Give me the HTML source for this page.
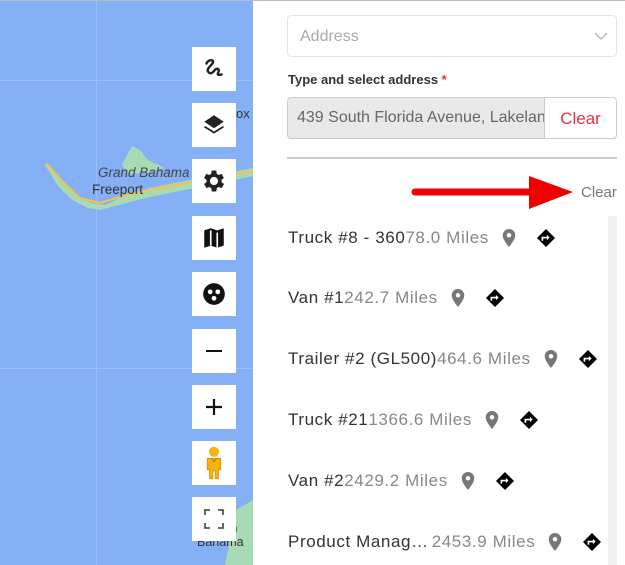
<!DOCTYPE html>
<html><head><style>
body{margin:0;width:625px;height:565px;overflow:hidden;font-family:"Liberation Sans",sans-serif;position:relative;background:#fff}
.map{position:absolute;left:0;top:0;width:253px;height:565px;background:#86b0f6;overflow:hidden}
.btn{position:absolute;left:192px;width:44px;height:44px;background:#fff;display:flex;align-items:center;justify-content:center}
.row{position:absolute;left:288px;height:22px;font-size:17px;letter-spacing:.6px;color:#333;display:flex;align-items:center;white-space:nowrap}
.row .m{color:#888}
.pin{margin-left:13px}
.dir{margin-left:21px}
</style></head><body>
<div class="map">
<div style="position:absolute;left:96px;top:0;width:1px;height:565px;background:#9cc0f8"></div>
<div style="position:absolute;left:0;top:80px;width:253px;height:1px;background:#9cc0f8"></div>
<div style="position:absolute;left:0;top:368px;width:253px;height:1px;background:#9cc0f8"></div>
<svg style="position:absolute;left:0;top:0" width="253" height="565">
<path d="M46 163 L62 180 L78 196 L92 203 L105 205 L120 198 L150 188 L200 178 L253 168 L253 176 L200 187 L150 197 L115 206 L100 210 L88 208 L72 200 L58 186 L45 165Z" fill="#a8dab5"/>
<path d="M122 165 L132 146 L140 150 L148 160 L165 168 L150 172 L128 174Z" fill="#a8dab5"/>
<path d="M47 164 L62 181 L80 198 L100 203 L130 194 L200 181 L253 171" stroke="#f5c24a" stroke-width="2" fill="none"/>
<path d="M236 510 L253 500 L253 565 L225 565Z" fill="#a8dab5"/>
</svg>
<div style="position:absolute;left:98px;top:165px;font-size:13.5px;font-style:italic;color:#444">Grand Bahama</div>
<div style="position:absolute;left:92px;top:182px;font-size:13.5px;color:#333">Freeport</div>
<div style="position:absolute;left:236px;top:106px;font-size:13px;color:#333">ox</div>
<div style="position:absolute;left:197px;top:521px;font-size:12.5px;color:#333;line-height:14px">San An<br>Bahama</div>
<div class="btn" style="top:47px"><svg width="26" height="26" viewBox="0 0 24 24"><path d="M5 7c2-4 7-4 6-1s-7 6-4 9 5-2 7-3 3 1 2 3-1 3 3 2" stroke="#222" stroke-width="2.2" fill="none" stroke-linecap="round"/></svg></div>
<div class="btn" style="top:103px"><svg width="26" height="26" viewBox="0 0 24 24"><path d="M12 3l9 6-9 6-9-6z" fill="#222"/><path d="M4 13l8 5 8-5 1.5 1-9.5 6-9.5-6z" fill="#222"/></svg></div>
<div class="btn" style="top:159px"><svg width="28" height="28" viewBox="0 0 24 24"><path fill="#222" d="M19.4 13a7.5 7.5 0 000-2l2.1-1.6-2-3.5-2.5 1a7 7 0 00-1.7-1L15 3h-4l-.4 2.9a7 7 0 00-1.7 1l-2.5-1-2 3.5L6.6 11a7.5 7.5 0 000 2l-2.1 1.6 2 3.5 2.5-1a7 7 0 001.7 1L11 21h4l.4-2.9a7 7 0 001.7-1l2.5 1 2-3.5zM13 15.5a3.5 3.5 0 110-7 3.5 3.5 0 010 7z" transform="translate(-1 0)"/></svg></div>
<div class="btn" style="top:216px"><svg width="26" height="26" viewBox="0 0 24 24"><path d="M3 5l6-2 6 2 6-2v16l-6 2-6-2-6 2z" fill="#111"/><path d="M9 5v14M15 7v14" stroke="#fff" stroke-width="1.5"/></svg></div>
<div class="btn" style="top:272px"><svg width="26" height="26" viewBox="0 0 24 24"><circle cx="12" cy="12" r="10" fill="#111"/><circle cx="8.5" cy="10" r="2.2" fill="#fff"/><circle cx="15.5" cy="10" r="2.2" fill="#fff"/><circle cx="12" cy="16" r="2.2" fill="#fff"/></svg></div>
<div class="btn" style="top:329px"><div style="width:16px;height:2.5px;background:#111"></div></div>
<div class="btn" style="top:385px"><svg width="18" height="18"><path d="M9 1v16M1 9h16" stroke="#111" stroke-width="2.2"/></svg></div>
<div class="btn" style="top:441px"><svg width="18" height="36" viewBox="0 0 16 30"><circle cx="8" cy="5" r="4.5" fill="#f9b10b"/><path d="M2 11h12v10h-2v8h-3v-7h-2v7H4v-8H2z" fill="#f9b10b" stroke="#c98a00" stroke-width=".6"/><path d="M6 11l2 3 2-3" stroke="#d06020" stroke-width=".8" fill="none"/></svg></div>
<div class="btn" style="top:497px"><svg width="24" height="24" viewBox="0 0 24 24"><path d="M3 8V3h5M16 3h5v5M21 16v5h-5M8 21H3v-5" stroke="#555" stroke-width="1.8" fill="none"/></svg></div>
</div>
<div style="position:absolute;left:0;top:0;width:625px;height:1px;background:#bbb"></div>
<div style="position:absolute;left:287px;top:15px;width:330px;height:42px;border:1px solid #e3e3e3;border-radius:4px;box-sizing:border-box;font-size:16px;color:#aaa;padding:12px 0 0 12px">Address<svg style="position:absolute;right:8px;top:16px" width="14" height="9"><path d="M1 1l6 6 6-6" stroke="#bbb" stroke-width="1.5" fill="none"/></svg></div>
<div style="position:absolute;left:288px;top:72px;font-size:13px;font-weight:bold;color:#333">Type and select address <span style="color:#e33">*</span></div>
<div style="position:absolute;left:287px;top:97px;width:258px;height:42px;background:#e9e9e9;border:1px solid #ccc;border-radius:4px 0 0 4px;box-sizing:border-box;font-size:16px;color:#666;padding:11px 0 0 9px;white-space:nowrap;overflow:hidden">439 South Florida Avenue, Lakelan</div>
<div style="position:absolute;left:544px;top:97px;width:73px;height:42px;border:1px solid #ccc;border-radius:0 4px 4px 0;box-sizing:border-box;font-size:17px;color:#dc3545;text-align:center;padding-top:11px">Clear</div>
<div style="position:absolute;left:287px;top:157px;width:330px;height:2px;background:#ccc"></div>
<svg style="position:absolute;left:405px;top:172px" width="170" height="40"><path d="M10 20H140" stroke="#e00" stroke-width="7" stroke-linecap="round"/><path d="M124 4L168 20 124 37z" fill="#e00"/></svg>
<div style="position:absolute;left:581px;top:184px;font-size:15px;color:#777">Clear</div>
<div style="position:absolute;left:608px;top:216px;width:9px;height:349px;background:#f1f1f1"></div>

<div class="row" style="top:227px">Truck #8 - 360<span class="m">78.0 Miles</span><svg class="pin" width="14" height="18" viewBox="0 0 14 20"><path d="M7 0a7 7 0 00-7 7c0 5 7 13 7 13s7-8 7-13a7 7 0 00-7-7zm0 9.5a2.5 2.5 0 110-5 2.5 2.5 0 010 5z" fill="#777"/></svg><svg class="dir" width="18" height="18" viewBox="0 0 20 20"><path d="M10 0l10 10-10 10L0 10z" fill="#000"/><path d="M6 13v-3.5h6" stroke="#fff" stroke-width="1.8" fill="none"/><path d="M11 6.5l3 3-3 3z" fill="#fff"/></svg></div>
<div class="row" style="top:287px">Van #1<span class="m">242.7 Miles</span><svg class="pin" width="14" height="18" viewBox="0 0 14 20"><path d="M7 0a7 7 0 00-7 7c0 5 7 13 7 13s7-8 7-13a7 7 0 00-7-7zm0 9.5a2.5 2.5 0 110-5 2.5 2.5 0 010 5z" fill="#777"/></svg><svg class="dir" width="18" height="18" viewBox="0 0 20 20"><path d="M10 0l10 10-10 10L0 10z" fill="#000"/><path d="M6 13v-3.5h6" stroke="#fff" stroke-width="1.8" fill="none"/><path d="M11 6.5l3 3-3 3z" fill="#fff"/></svg></div>
<div class="row" style="top:348px">Trailer #2 (GL500)<span class="m">464.6 Miles</span><svg class="pin" width="14" height="18" viewBox="0 0 14 20"><path d="M7 0a7 7 0 00-7 7c0 5 7 13 7 13s7-8 7-13a7 7 0 00-7-7zm0 9.5a2.5 2.5 0 110-5 2.5 2.5 0 010 5z" fill="#777"/></svg><svg class="dir" width="18" height="18" viewBox="0 0 20 20"><path d="M10 0l10 10-10 10L0 10z" fill="#000"/><path d="M6 13v-3.5h6" stroke="#fff" stroke-width="1.8" fill="none"/><path d="M11 6.5l3 3-3 3z" fill="#fff"/></svg></div>
<div class="row" style="top:409px">Truck #21<span class="m">1366.6 Miles</span><svg class="pin" width="14" height="18" viewBox="0 0 14 20"><path d="M7 0a7 7 0 00-7 7c0 5 7 13 7 13s7-8 7-13a7 7 0 00-7-7zm0 9.5a2.5 2.5 0 110-5 2.5 2.5 0 010 5z" fill="#777"/></svg><svg class="dir" width="18" height="18" viewBox="0 0 20 20"><path d="M10 0l10 10-10 10L0 10z" fill="#000"/><path d="M6 13v-3.5h6" stroke="#fff" stroke-width="1.8" fill="none"/><path d="M11 6.5l3 3-3 3z" fill="#fff"/></svg></div>
<div class="row" style="top:470px">Van #2<span class="m">2429.2 Miles</span><svg class="pin" width="14" height="18" viewBox="0 0 14 20"><path d="M7 0a7 7 0 00-7 7c0 5 7 13 7 13s7-8 7-13a7 7 0 00-7-7zm0 9.5a2.5 2.5 0 110-5 2.5 2.5 0 010 5z" fill="#777"/></svg><svg class="dir" width="18" height="18" viewBox="0 0 20 20"><path d="M10 0l10 10-10 10L0 10z" fill="#000"/><path d="M6 13v-3.5h6" stroke="#fff" stroke-width="1.8" fill="none"/><path d="M11 6.5l3 3-3 3z" fill="#fff"/></svg></div>
<div class="row" style="top:531px">Product Manag…<span class="m" style="margin-left:3px">2453.9 Miles</span><svg class="pin" width="14" height="18" viewBox="0 0 14 20"><path d="M7 0a7 7 0 00-7 7c0 5 7 13 7 13s7-8 7-13a7 7 0 00-7-7zm0 9.5a2.5 2.5 0 110-5 2.5 2.5 0 010 5z" fill="#777"/></svg><svg class="dir" width="18" height="18" viewBox="0 0 20 20"><path d="M10 0l10 10-10 10L0 10z" fill="#000"/><path d="M6 13v-3.5h6" stroke="#fff" stroke-width="1.8" fill="none"/><path d="M11 6.5l3 3-3 3z" fill="#fff"/></svg></div>
</body></html>
